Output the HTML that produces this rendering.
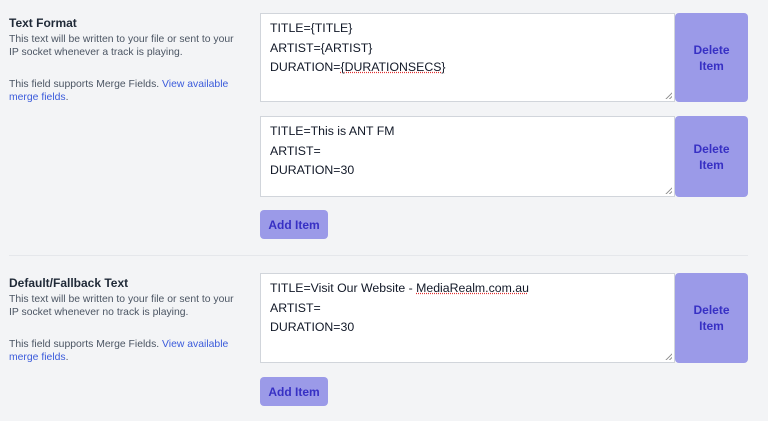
<!DOCTYPE html>
<html><head><style>
body{margin:0;width:768px;height:421px;background:#f3f4f6;font-family:"Liberation Sans",sans-serif;position:relative;overflow:hidden}
.a{position:absolute}
.t{font-size:12px;font-weight:bold;color:#1f2937}
.d{font-size:10.4px;color:#4b5563;line-height:13px}
.d a{color:#3b5bdb}
.ta{background:#fff;border:1px solid #d1d5db;box-sizing:border-box;font-size:12.3px;color:#111827;padding:5px 9px;line-height:19.5px}
.btn{background:#9b9ae8;border-radius:4px;color:#3730c4;font-weight:bold;font-size:12px;display:flex;align-items:center;justify-content:center;text-align:center;line-height:16px}
.sq{text-decoration:underline dotted #e03131}
.rz{position:absolute;right:2px;bottom:2px;width:8px;height:8px;background:repeating-linear-gradient(135deg,transparent 0 1.5px,#999 1.5px 2.5px);clip-path:polygon(100% 0,100% 100%,0 100%)}
</style></head><body>
<div class="a t" style="left:9px;top:16px">Text Format</div>
<div class="a d" style="left:9px;top:33px;width:232px">This text will be written to your file or sent to your IP socket whenever a track is playing.</div>
<div class="a d" style="left:9px;top:78px;width:232px">This field supports Merge Fields. <a>View available merge fields</a>.</div>
<div class="a ta" style="left:260px;top:13px;width:415px;height:89px">TITLE={TITLE}<br>ARTIST={ARTIST}<br>DURATION=<span class="sq">{DURATIONSECS}</span><div class="rz"></div></div>
<div class="a btn" style="left:675px;top:13px;width:73px;height:89px">Delete<br>Item</div>
<div class="a ta" style="left:260px;top:116px;width:415px;height:81px">TITLE=This is ANT FM<br>ARTIST=<br>DURATION=30<div class="rz"></div></div>
<div class="a btn" style="left:675px;top:116px;width:73px;height:81px">Delete<br>Item</div>
<div class="a btn" style="left:260px;top:210px;width:68px;height:29px">Add Item</div>
<div class="a" style="left:9px;top:255px;width:739px;height:1px;background:#e5e7eb"></div>
<div class="a t" style="left:9px;top:276px">Default/Fallback Text</div>
<div class="a d" style="left:9px;top:293px;width:232px">This text will be written to your file or sent to your IP socket whenever no track is playing.</div>
<div class="a d" style="left:9px;top:338px;width:232px">This field supports Merge Fields. <a>View available merge fields</a>.</div>
<div class="a ta" style="left:260px;top:273px;width:415px;height:90px">TITLE=Visit Our Website - <span class="sq">MediaRealm.com.au</span><br>ARTIST=<br>DURATION=30<div class="rz"></div></div>
<div class="a btn" style="left:675px;top:273px;width:73px;height:90px">Delete<br>Item</div>
<div class="a btn" style="left:260px;top:377px;width:68px;height:29px">Add Item</div>
</body></html>
